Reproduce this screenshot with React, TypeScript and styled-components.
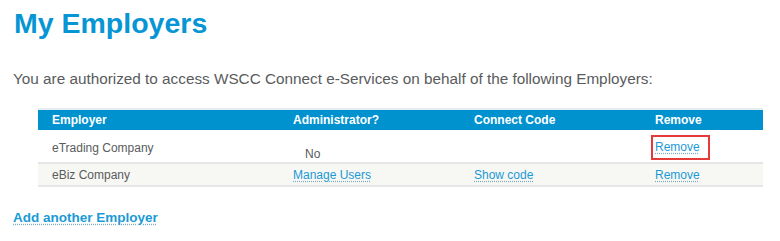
import React from "react";
import styled, { createGlobalStyle } from "styled-components";

const GlobalStyle = createGlobalStyle`
  html, body { margin: 0; padding: 0; background: #ffffff; }
  body { font-family: "Liberation Sans", Arial, sans-serif; }
`;

const Page = styled.div`
  display: flex;
  flex-direction: column;
  align-items: flex-start;
  padding: 7px 0 0 13px;
  width: 767px;
  box-sizing: border-box;
`;

const Title = styled.h1`
  margin: 0;
  font-size: 28.5px;
  line-height: 32px;
  font-weight: bold;
  color: #0795d4;
  padding-left: 1px;
`;

const Intro = styled.p`
  margin: 31px 0 0 0;
  font-size: 15.3px;
  line-height: 17px;
  color: #595b5d;
`;

const Table = styled.div`
  margin: 21px 0 0 25px;
  display: grid;
  grid-template-columns: 241px 181px 181px 122px;
  grid-template-rows: 20px 34px 23px;
  border-top: 2px solid #e6edf1;
  font-size: 12px;
  line-height: 14px;
  color: #595b5d;
`;

const HeadCell = styled.div`
  background: #0092cf;
  color: #ffffff;
  font-weight: bold;
  line-height: 20px;
  padding-left: 14px;
  white-space: nowrap;
`;

const Cell = styled.div<{ $alt?: boolean; $pt?: number; $pl?: number }>`
  box-sizing: border-box;
  background: ${(p) => (p.$alt ? "#f7f7f3" : "#ffffff")};
  border-bottom: 2px solid #e6e6e6;
  padding-left: ${(p) => p.$pl ?? 14}px;
  padding-top: ${(p) => p.$pt ?? 0}px;
  display: flex;
  align-items: ${(p) => (p.$pt !== undefined ? "flex-start" : "center")};
  white-space: nowrap;
`;

const Link = styled.a`
  color: #1a9ad6;
  text-decoration: underline dotted;
  text-decoration-color: #7aa9c4;
  text-underline-offset: 2px;
  cursor: pointer;
`;

const Highlight = styled.span`
  display: inline-block;
  border: 2px solid #e5393a;
  padding: 3px 8px 4px 2px;
  line-height: 14px;
`;

const AddLink = styled(Link)`
  margin-top: 23px;
  font-size: 13.5px;
  line-height: 16px;
  font-weight: bold;
`;

export default function App() {
  return (
    <>
      <GlobalStyle />
      <Page>
        <Title>My Employers</Title>
        <Intro>
          You are authorized to access WSCC Connect e-Services on behalf of the following Employers:
        </Intro>
        <Table>
          <HeadCell>Employer</HeadCell>
          <HeadCell>Administrator?</HeadCell>
          <HeadCell>Connect Code</HeadCell>
          <HeadCell>Remove</HeadCell>

          <Cell $pt={11}>eTrading Company</Cell>
          <Cell $pt={17} $pl={26}>No</Cell>
          <Cell />
          <Cell $pt={5} $pl={10}>
            <Highlight>
              <Link>Remove</Link>
            </Highlight>
          </Cell>

          <Cell $alt>eBiz Company</Cell>
          <Cell $alt>
            <Link>Manage Users</Link>
          </Cell>
          <Cell $alt>
            <Link>Show code</Link>
          </Cell>
          <Cell $alt>
            <Link>Remove</Link>
          </Cell>
        </Table>
        <AddLink>Add another Employer</AddLink>
      </Page>
    </>
  );
}
